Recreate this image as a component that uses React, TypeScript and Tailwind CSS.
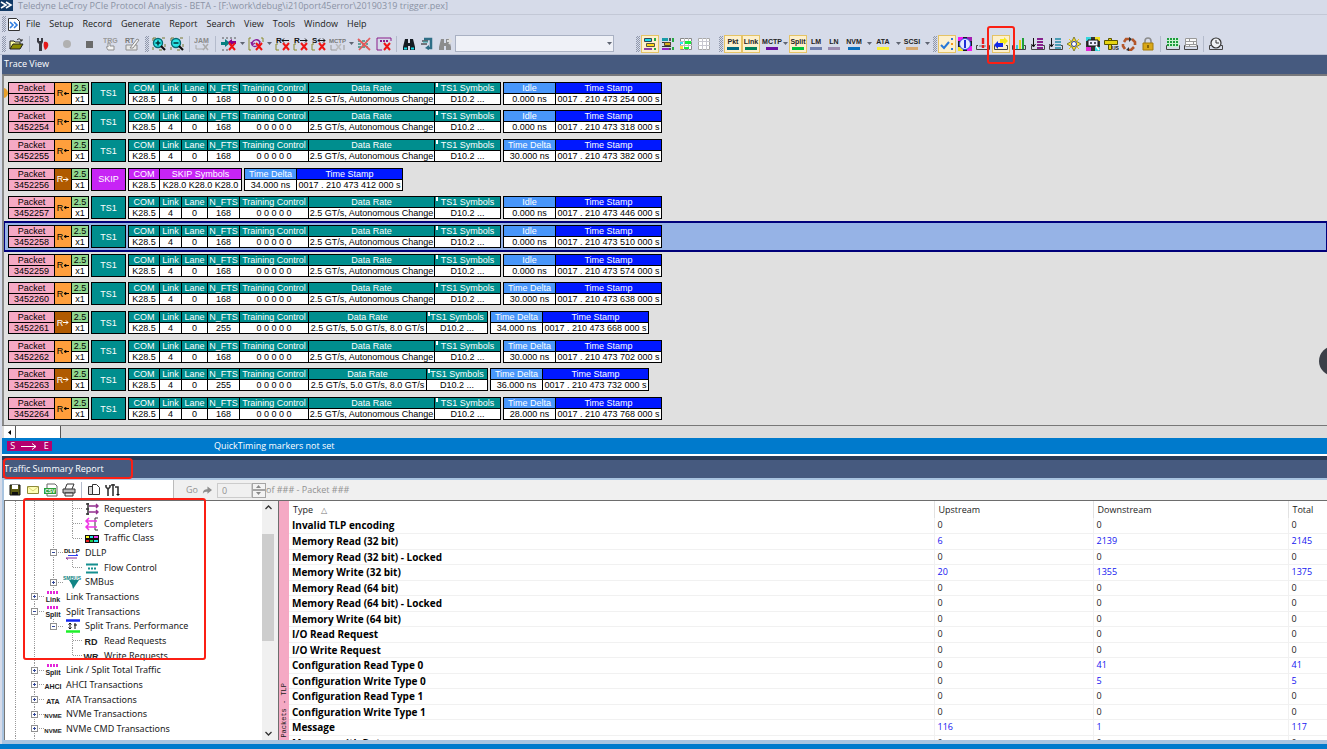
import { ReactNode } from "react";
import clsx from "clsx";

/* ---------- icons ---------- */

function Pic({ children, w = 16 }: { children: ReactNode; w?: number }) {
  return (
    <svg width={w} height="14" viewBox={`0 0 ${w} 14`} className="shrink-0" aria-hidden="true">
      {children}
    </svg>
  );
}

function RedX() {
  return <path d="M8 6l6 7m0-7l-6 7" stroke="#f01414" strokeWidth="2" fill="none" />;
}

function Tag({ children, x = 0, y = 6, size = 7, fill = "#111" }: { children: string; x?: number; y?: number; size?: number; fill?: string }) {
  return (
    <text x={x} y={y} fontSize={size} fontWeight="700" fill={fill} fontFamily="Liberation Sans, sans-serif">
      {children}
    </text>
  );
}

const FolderIcon = (
  <Pic>
    <path d="M2 12V4h4l1 1h5v2" fill="#ffffa0" stroke="#222" />
    <path d="M2 12l3-5h10l-3 5z" fill="#8c8c00" stroke="#222" />
    <path d="M9 3c2-2 4-1 4 1m1-2v2h-2" fill="none" stroke="#222" />
  </Pic>
);
const PlugIcon = (
  <Pic>
    <path d="M2 1h2v3h2V1h2v4L7 7v7H4V7L2 5z" fill="#3c3c44" />
    <path d="M9 5c5-2 6 5 1 8-1-2-2-5-1-8z" fill="#e51a1a" />
  </Pic>
);
const DotIcon = <Pic><circle cx="8" cy="7" r="4" fill="#b1b1b1" /></Pic>;
const StopIcon = <Pic><path d="M5 4h7v7H5z" fill="#6b6b6b" /></Pic>;
const TrgIcon = (
  <Pic>
    <Tag fill="#999">TRG</Tag>
    <path d="M5 13c-2-3-2-4 0-3V6h2v3h4v4z" fill="#f4f4f4" stroke="#8d8d8d" />
  </Pic>
);
const RtIcon = (
  <Pic>
    <path d="M2 8h11v5H2z" fill="#e8e8e8" stroke="#8d8d8d" />
    <Tag x={1} fill="#777">RT</Tag>
    <path d="M6 11l7-9 2 1-6 8z" fill="#f5f5f5" stroke="#8d8d8d" />
  </Pic>
);
function Zoom({ plus }: { plus?: boolean }) {
  return (
    <Pic>
      <path d="M2 1v12h12V1z" fill="none" stroke="#77772e" strokeDasharray="3 6" />
      <circle cx="7" cy="6" r="4.5" fill="#2ce5e5" stroke="#066b75" strokeWidth="1.4" />
      <path d={plus ? "M4.5 6h5M7 3.5v5" : "M4.5 6h5"} stroke="#00323a" strokeWidth="1.5" />
      <path d="M10 9l4 4" stroke="#111" strokeWidth="2.2" />
    </Pic>
  );
}
const JamIcon = (
  <Pic>
    <path d="M2 8v4h7" stroke="#aaa" fill="none" />
    <Tag fill="#888">JAM</Tag>
    <path d="M9 7l5 6m0-6l-5 6" stroke="#aaa" strokeWidth="1.5" />
  </Pic>
);
const ArrowXIcon = (
  <Pic>
    <path d="M1 1h14M1 13h6" stroke="#555" strokeDasharray="2 2" />
    <path d="M0 5h4V2l5 4-5 4V8H0z" fill="#078080" />
    <path d="M15 4h-4V2L7 5l4 4V7h4z" fill="#8a008a" />
    <RedX />
  </Pic>
);
const LoopXIcon = (
  <Pic>
    <path d="M3 1H1v12h2M13 1h2v4" fill="none" stroke="#8b8b2b" />
    <path d="M4 8c0-6 7-7 8-2M4 8l-1-3M4 8l3-2M12 4c0 5-6 7-8 4" fill="none" stroke="#8a1c9a" strokeWidth="1.3" />
    <RedX />
  </Pic>
);
function TagX({ text, left, right }: { text: string; left?: boolean; right?: boolean }) {
  return (
    <Pic>
      <path d="M3 7H1v6h3" fill="none" stroke="#8b8b2b" />
      <Tag x={1} size={8}>{text}</Tag>
      <path d="M7 3.5h7" stroke="#111" />
      {left && <path d="M9 1.5l-2 2 2 2" fill="none" stroke="#111" />}
      {right && <path d="M12 1.5l2 2-2 2" fill="none" stroke="#111" />}
      <RedX />
    </Pic>
  );
}
const MctpOffIcon = (
  <Pic w={18}>
    <path d="M2 8v5h6M15 8v5" stroke="#999" fill="none" />
    <Tag size={6} fill="#777">MCTP</Tag>
    <path d="M7 7l5 6m0-6l-5 6" stroke="#bbb" strokeWidth="1.5" />
  </Pic>
);
const NoGridIcon = (
  <Pic>
    <path d="M2 4h10M2 7h10M2 10h10" stroke="#3f8d80" strokeWidth="1.5" strokeDasharray="3 1" />
    <path d="M2 2l12 11M14 1L3 13" stroke="#e35a5a" strokeWidth="1.8" />
  </Pic>
);
const FrameXIcon = (
  <Pic>
    <path d="M1 13V1h14v3M1 13h5" fill="none" stroke="#8a1c8a" />
    <path d="M4 4h9" stroke="#8a1c8a" strokeWidth="2" strokeDasharray="2 1" />
    <RedX />
  </Pic>
);
function Binoculars({ off }: { off?: boolean }) {
  return (
    <Pic>
      <path d="M4 2h3v4h2V2h3l2 8v3H9V9H7v4H2v-3z" fill={off ? "#8c8c8c" : "#161c22"} />
      <path d={off ? "M10 4h4l-2-3m2 3l-2 3" : "M3 11.5h3M10 11.5h3"} stroke={off ? "#ddd" : "#14d9e5"} strokeWidth="1.8" fill="none" />
    </Pic>
  );
}
const HookIcon = (
  <Pic>
    <path d="M5 2h7v9H8" fill="none" stroke="#2e6e86" strokeWidth="2.5" />
    <path d="M3 4h6M2 7h6" stroke="#111" />
    <path d="M4 5h5" stroke="#26a5a5" />
    <path d="M10 8l-4 3 4 2z" fill="#2e6e86" />
  </Pic>
);
const BlocksIcon = (
  <Pic>
    <path d="M2.5 1.5h7v3h-7z" fill="#18dce8" stroke="#345" />
    <path d="M4.500 6.500h8v3h-8z" fill="#ffd817" stroke="#554" />
    <path d="M2 11h8v2H2z" fill="#9240a5" />
    <path d="M12 1h2v3h-2zM12 11h2v2h-2z" fill="#27a844" />
  </Pic>
);
const DenseBlocksIcon = (
  <Pic>
    <path d="M2 1h6v3H2z" fill="#189ca8" />
    <path d="M2 5h9v1H2zM2 9h9v1H2z" fill="#333" />
    <path d="M4.500 5.500h6v3h-6z" fill="#d8b020" stroke="#543" />
    <path d="M2 11h7v2H2z" fill="#9220c5" />
    <path d="M9 1h2v3H9zM9 11h2v2H9z" fill="#555" />
    <path d="M12 1h2v4h-2zM12 10h2v3h-2z" fill="#27a844" />
  </Pic>
);
const ColorGridIcon = (
  <Pic>
    <path d="M2.5 1.500h11v11h-11z" fill="#fff" stroke="#888" />
    <path d="M2 4.500h12M2 8.500h12M6.500 1v12M10.500 1v12" stroke="#bbb" />
    <path d="M7 4h6v3H7zM6 10h5v2H6z" fill="#12ee3c" />
    <path d="M2 5h3v2H2z" fill="#32e4ef" />
    <path d="M2 9h3v3H2z" fill="#f4e23c" />
  </Pic>
);
const PlainGridIcon = (
  <Pic>
    <path d="M2.5 1.500h11v11h-11z" fill="#fff" stroke="#aaa" />
    <path d="M2 4.500h12M2 8.500h12M6.500 1v12M10.500 1v12" stroke="#c7c7cf" />
  </Pic>
);
const CheckListIcon = (
  <Pic>
    <path d="M2 8l3 3 5-6" fill="none" stroke="#2878d8" strokeWidth="2" />
    <path d="M12 1h2v2h-2zM12 11h2v2h-2z" fill="#2878d8" />
    <path d="M12 6h2v2h-2z" fill="#f29a1a" />
  </Pic>
);
const InfoIcon = (
  <Pic>
    <path d="M1 0h14v14H1z" fill="#1c1c22" />
    <path d="M1 0h5v4H1zM10 9h5v5h-5z" fill="#f416f4" />
    <path d="M10 0h5v4h-5z" fill="#a01ab0" />
    <path d="M1 10h5v4H1z" fill="#f2e61a" />
    <circle cx="8" cy="7" r="5.5" fill="#e4eaff" stroke="#2f4be0" />
    <path d="M8 3v8" stroke="#1d2ed8" strokeWidth="2" />
  </Pic>
);
const Tray = <path d="M3 8.500H1.500v4h13v-4H13" fill="none" stroke="#444" />;
const AlertTrayIcon = (
  <Pic>
    {Tray}
    <path d="M4 9h7" stroke="#777" />
    <path d="M8 1v6M8 8v3" stroke="#e51a1a" strokeWidth="2.400" />
  </Pic>
);
const SummaryIcon = (
  <Pic>
    {Tray}
    <path d="M15 4l-4-4v2H7v4h4v2z" fill="#f6ea1c" />
    <path d="M1 8l4-4v2h5v4H5v2z" fill="#1428e8" />
  </Pic>
);
const ChartIcon = (
  <Pic>
    {Tray}
    <path d="M3 5v7" stroke="#e820d8" strokeWidth="2" />
    <path d="M6 8v4" stroke="#38c8d8" strokeWidth="2" />
    <path d="M9 3v9" stroke="#e5d51a" strokeWidth="2" />
    <path d="M12 1v11" stroke="#20a038" strokeWidth="2" />
  </Pic>
);
function ListTray({ color }: { color: string }) {
  return (
    <Pic>
      {Tray}
      <path d="M3.500 1v8M1.500 7l2 3 2-3" fill="none" stroke="#111" />
      <path d="M7 2h6M7 5h6M7 8h6M7 11h6" stroke={color} strokeWidth="2" />
    </Pic>
  );
}
const SunIcon = (
  <Pic>
    <path d="M8 0l2 4 5 3-5 3-2 4-2-4-5-3 5-3z" fill="#ffe22a" stroke="#65671f" strokeWidth=".8" />
    <path d="M3 2l2 2M13 2l-2 2M3 12l2-2M13 12l-2-2" stroke="#e8c81c" />
    <circle cx="8" cy="7" r="2.5" fill="#fff" stroke="#2336a0" />
  </Pic>
);
const FindTilesIcon = (
  <Pic>
    <path d="M1 0h14v14H1z" fill="#333" />
    <path d="M1 0h5v4H1zM10 10h5v4h-5z" fill="#35d6dd" />
    <path d="M10 0h5v4h-5z" fill="#f0e020" />
    <path d="M1 10h5v4H1z" fill="#e328d5" />
    <path d="M3 3h10v6H3z" fill="#eef" stroke="#111" />
    <path d="M5 5h2v2H5zM9 5h2v2H9z" fill="#556" />
    <path d="M11 9l3 4" stroke="#fff" strokeWidth="1.5" />
  </Pic>
);
const RulerIcon = (
  <Pic>
    <path d="M5.500 1.500h3v11h-3z" fill="#e8d510" stroke="#5b5400" />
    <path d="M1.500 3.500h13v4h-13z" fill="#e8d510" stroke="#5b5400" />
    <Tag x={9} y={13} size={5}>US</Tag>
  </Pic>
);
const CycleIcon = (
  <Pic>
    <path d="M3 5l2-3h4M11 2l3 3v3M13 10l-3 3H7M4 12L2 9V7" fill="none" stroke="#b4562a" strokeWidth="2.600" />
    <path d="M8 0l3 2-3 3zM8 10l-3 3 3 1z" fill="#333" />
  </Pic>
);
const LockIcon = (
  <Pic>
    <path d="M5 7V4c0-4 6-4 6 0v3" fill="none" stroke="#8d8d8d" strokeWidth="1.6" />
    <path d="M3 6h10v7H3z" fill="#d9a818" stroke="#a57a08" />
    <path d="M8 8v3" stroke="#6a4d00" strokeWidth="1.5" />
  </Pic>
);
function BrickTray({ green }: { green?: boolean }) {
  return (
    <Pic>
      {Tray}
      <path d="M2 1h12v9H2z" fill={green ? "#c8f2cf" : "#fafafa"} />
      {green ? (
        <path d="M2 2h12M2 5h12M2 8h12" stroke="#1d9c3c" strokeWidth="2" strokeDasharray="2 1" />
      ) : (
        <path d="M2.500 1.500h11v8h-11zM2 4.500h12M2 7.500h12M6.500 1v3M10.500 5v3M6.500 8v2" stroke="#999" fill="none" />
      )}
    </Pic>
  );
}
const ClockTrayIcon = (
  <Pic>
    {Tray}
    <circle cx="8" cy="6" r="5" fill="#eef0f4" stroke="#333" strokeWidth="1.2" />
    <path d="M8 3v3h3" fill="none" stroke="#333" />
  </Pic>
);

/* ---------- toolbar parts ---------- */

function ToolButton({ label, on, className, children }: { label: string; on?: boolean; className?: string; children: ReactNode }) {
  return (
    <button
      type="button"
      aria-label={label}
      className={clsx(
        "relative flex h-[18px] w-[18px] shrink-0 items-center justify-center border",
        on ? "border-[#e5c365] bg-[#fdf0cd]" : "border-transparent",
        className,
      )}
    >
      {children}
    </button>
  );
}

function LabelButton({ text, bar, on, className }: { text: string; bar: string; on?: boolean; className?: string }) {
  return (
    <button
      type="button"
      className={clsx(
        "flex h-[18px] w-[18px] shrink-0 flex-col items-center justify-center border font-['Liberation_Sans',sans-serif] text-[7px] leading-[10px] font-bold text-[#222]",
        on ? "border-[#e5c365] bg-[#fdf0cd]" : "border-transparent",
        className,
      )}
    >
      {text}
      <span className={clsx("h-[3px] w-3", bar)} />
    </button>
  );
}

function Grip({ className }: { className?: string }) {
  return (
    <span
      className={clsx(
        "h-4 w-1 shrink-0 bg-[repeating-conic-gradient(#8f97ab_0_25%,#d6dbe9_0_50%)] bg-[length:2px_2px]",
        className,
      )}
    />
  );
}

function Sep({ className }: { className?: string }) {
  return <span className={clsx("h-4 w-px shrink-0 bg-[#b4bbcc]", className)} />;
}

function Caret({ className }: { className?: string }) {
  return (
    <span className={clsx("flex w-2 shrink-0 justify-center", className)}>
      <svg width="5" height="3" viewBox="0 0 5 3"><path d="M0 0h5L2.500 3z" fill="#5f6572" /></svg>
    </span>
  );
}

function MainToolbar() {
  return (
    <div className="flex h-[22px] items-center border-b border-[#b9c0d2] pl-0.5">
      <Grip />
      <ToolButton label="Open" className="ml-px">{FolderIcon}</ToolButton>
      <Sep className="mx-1" />
      <ToolButton label="Recording options">{PlugIcon}</ToolButton>
      <ToolButton label="Start recording" className="ml-1.5">{DotIcon}</ToolButton>
      <ToolButton label="Stop recording" className="ml-1">{StopIcon}</ToolButton>
      <ToolButton label="Manual trigger" className="ml-1">{TrgIcon}</ToolButton>
      <ToolButton label="Real-time statistics" className="ml-[3px]">{RtIcon}</ToolButton>
      <Grip className="ml-1" />
      <ToolButton label="Zoom in" className="ml-px"><Zoom plus /></ToolButton>
      <ToolButton label="Zoom out"><Zoom /></ToolButton>
      <Sep className="mx-[3px]" />
      <ToolButton label="Jammer">{JamIcon}</ToolButton>
      <Sep className="mx-1" />
      <ToolButton label="Hide direction">{ArrowXIcon}</ToolButton>
      <Caret />
      <ToolButton label="Hide loops" className="ml-px">{LoopXIcon}</ToolButton>
      <Caret />
      <ToolButton label="Hide upstream" className="ml-px"><TagX text="R" left /></ToolButton>
      <ToolButton label="Hide downstream"><TagX text="R" right /></ToolButton>
      <ToolButton label="Hide split"><TagX text="S" left right /></ToolButton>
      <ToolButton label="Hide MCTP" className="ml-px">{MctpOffIcon}</ToolButton>
      <Caret />
      <ToolButton label="Hide channel">{NoGridIcon}</ToolButton>
      <ToolButton label="Hide frame" className="ml-0.5">{FrameXIcon}</ToolButton>
      <Sep className="mx-[3px]" />
      <ToolButton label="Find"><Binoculars /></ToolButton>
      <ToolButton label="Find next">{HookIcon}</ToolButton>
      <ToolButton label="Find again"><Binoculars off /></ToolButton>
      <div className="relative ml-px h-[17px] w-[159px] shrink-0">
        <select aria-label="Search text" className="h-full w-full appearance-none border border-[#a9b1c3] bg-[#eff1f7]">
          <option />
        </select>
        <Caret className="pointer-events-none absolute top-[7px] right-px" />
      </div>
      <Grip className="ml-[22px]" />
      <ToolButton label="Packet view" on className="ml-px">{BlocksIcon}</ToolButton>
      <ToolButton label="Compact view">{DenseBlocksIcon}</ToolButton>
      <ToolButton label="Spreadsheet view">{ColorGridIcon}</ToolButton>
      <ToolButton label="Plain view">{PlainGridIcon}</ToolButton>
      <Grip className="ml-1.5" />
      <LabelButton text="Pkt" bar="bg-[#006a82]" on className="ml-px" />
      <LabelButton text="Link" bar="bg-[#00805a]" on />
      <LabelButton text="MCTP" bar="bg-[#6a0fa5]" className="ml-[3px]" />
      <Caret />
      <LabelButton text="Split" bar="bg-[#00c03c]" on />
      <LabelButton text="LM" bar="bg-[#7080ae]" />
      <LabelButton text="LN" bar="bg-[#9b8cb0]" />
      <LabelButton text="NVM" bar="bg-[#0a70c0]" className="ml-0.5" />
      <Caret className="ml-0.5" />
      <LabelButton text="ATA" bar="bg-[#f8f038]" className="ml-px" />
      <Caret className="ml-0.5" />
      <LabelButton text="SCSI" bar="bg-[#d8aa70]" className="ml-px" />
      <Caret className="ml-0.5" />
      <Grip className="ml-0.5" />
      <ToolButton label="Verification" on className="ml-px">{CheckListIcon}</ToolButton>
      <ToolButton label="File information">{InfoIcon}</ToolButton>
      <ToolButton label="Error summary">{AlertTrayIcon}</ToolButton>
      <ToolButton label="Traffic summary" on>
        {SummaryIcon}
        <span className="absolute -top-2.5 -left-1.5 z-20 h-[38px] w-7 rounded-[3px] border-2 border-[#fb1f14]" />
      </ToolButton>
      <ToolButton label="Bus utilization">{ChartIcon}</ToolButton>
      <ToolButton label="Link tracker" className="ml-px"><ListTray color="#86208c" /></ToolButton>
      <ToolButton label="Data flow"><ListTray color="#4c9eb5" /></ToolButton>
      <ToolButton label="Navigator">{SunIcon}</ToolButton>
      <ToolButton label="Config space" className="ml-px">{FindTilesIcon}</ToolButton>
      <ToolButton label="Timing calculator">{RulerIcon}</ToolButton>
      <ToolButton label="Flow control">{CycleIcon}</ToolButton>
      <ToolButton label="Lock" className="ml-px">{LockIcon}</ToolButton>
      <Sep className="mx-[3px]" />
      <ToolButton label="Memory map"><BrickTray green /></ToolButton>
      <ToolButton label="Register map"><BrickTray /></ToolButton>
      <Sep className="mx-[3px]" />
      <ToolButton label="Timing">{ClockTrayIcon}</ToolButton>
    </div>
  );
}

/* ---------- trace view ---------- */

type Packet = {
  id: number;
  kind: "up" | "down" | "skip";
  gap: "Idle" | "Time Delta";
  ns: string;
  stamp: string;
  selected?: boolean;
};

const packets: Packet[] = [
  { id: 3452253, kind: "up", gap: "Idle", ns: "0.000", stamp: "254" },
  { id: 3452254, kind: "up", gap: "Idle", ns: "0.000", stamp: "318" },
  { id: 3452255, kind: "up", gap: "Time Delta", ns: "30.000", stamp: "382" },
  { id: 3452256, kind: "skip", gap: "Time Delta", ns: "34.000", stamp: "412" },
  { id: 3452257, kind: "up", gap: "Idle", ns: "0.000", stamp: "446" },
  { id: 3452258, kind: "up", gap: "Idle", ns: "0.000", stamp: "510", selected: true },
  { id: 3452259, kind: "up", gap: "Idle", ns: "0.000", stamp: "574" },
  { id: 3452260, kind: "up", gap: "Time Delta", ns: "30.000", stamp: "638" },
  { id: 3452261, kind: "down", gap: "Time Delta", ns: "34.000", stamp: "668" },
  { id: 3452262, kind: "up", gap: "Time Delta", ns: "30.000", stamp: "702" },
  { id: 3452263, kind: "down", gap: "Time Delta", ns: "36.000", stamp: "732" },
  { id: 3452264, kind: "up", gap: "Time Delta", ns: "28.000", stamp: "768" },
];

function Cell({ head, value, color, width, corner }: { head: string; value: string; color: string; width: string; corner?: boolean }) {
  return (
    <div className={clsx("flex shrink-0 flex-col border-r border-black text-center", width)}>
      <div className={clsx("relative h-[11px] border-b border-black leading-[11px]", color)}>
        {corner && <span className="absolute top-0 left-px h-1 w-0.5 bg-white" />}
        {head}
      </div>
      <div className="h-[10px] bg-white leading-[11px] text-black">{value}</div>
    </div>
  );
}

const box = "flex h-[23px] shrink-0 border-y border-l border-black";

function PacketRow({ p }: { p: Packet }) {
  const skip = p.kind === "skip";
  const right = p.kind !== "up";
  const main = skip ? "bg-[#c724f5] text-white" : "bg-[#008e8e] text-white";
  return (
    <div
      className={clsx(
        "flex h-[29px] items-center whitespace-nowrap nth-[3n+2]:h-7",
        p.selected && "bg-[#96b3e6] outline-2 -outline-offset-1 outline-[#00007a]",
      )}
    >
      <div className={clsx(box, "ml-1")}>
        <div className="flex w-[46px] flex-col border-r border-black bg-[#f5a9c4] text-center">
          <div className="h-[11px] border-b border-black leading-[11px]">Packet</div>
          <div className="h-[10px] leading-[11px]">{p.id}</div>
        </div>
        <div className={clsx("flex w-[17px] items-center justify-center border-r border-black", right ? "bg-[#b05a00] text-white" : "bg-[#ff9f3c]")}>
          R
          <svg width="6" height="7" viewBox="0 0 6 7" aria-hidden="true">
            <path d={right ? "M0 3.500h5M3 1.500l2 2-2 2" : "M1 3.500h5M3 2.500l-2 1 2 1z"} stroke="currentColor" fill="none" />
          </svg>
        </div>
        <Cell head="2.5" value="x1" color="bg-[#8fd68f] text-black" width="w-[17px]" />
      </div>
      <div className={clsx("ml-0.5 flex h-[23px] w-[35px] shrink-0 items-center justify-center border border-black", main)}>
        {skip ? "SKIP" : "TS1"}
      </div>
      <div className={clsx(box, "ml-0.5")}>
        <Cell head="COM" value="K28.5" color={main} width="w-[31px]" />
        {skip ? (
          <Cell head="SKIP Symbols" value="K28.0 K28.0 K28.0" color={main} width="w-[82px]" />
        ) : (
          <>
            <Cell head="Link" value="4" color={main} width="w-[22px]" />
            <Cell head="Lane" value="0" color={main} width="w-[26px]" />
            <Cell head="N_FTS" value={right ? "255" : "168"} color={main} width="w-8" />
            <Cell head="Training Control" value="0 0 0 0 0" color={main} width="w-[69px]" />
            <Cell
              head="Data Rate"
              value={right ? "2.5 GT/s, 5.0 GT/s, 8.0 GT/s" : "2.5 GT/s, Autonomous Change"}
              color={main}
              width={right ? "w-[118px]" : "w-[126px]"}
            />
            <Cell head="TS1 Symbols" value="D10.2 ..." color={main} width={right ? "w-[61px]" : "w-[66px]"} corner />
          </>
        )}
      </div>
      <div className={clsx(box, "ml-0.5")}>
        <Cell head={p.gap} value={`${p.ns} ns`} color="bg-[#4896fa] text-white" width="w-[52px]" />
        <Cell head="Time Stamp" value={`0017 . 210 473 ${p.stamp} 000 s`} color="bg-[#0018ff] text-white" width="w-[106px]" />
      </div>
    </div>
  );
}

/* ---------- report tree ---------- */

function TreeTag({ text, dots, size = 7 }: { text: string; dots?: boolean; size?: number }) {
  return (
    <Pic w={19}>
      {dots && <path d="M3 2.500h11" stroke="#e326d9" strokeWidth="3" strokeDasharray="2 1" />}
      <text x="9" y={dots ? 12 : 11} textAnchor="middle" fontSize={size} fontWeight="700" fill="#222" fontFamily="Liberation Sans, sans-serif">
        {text}
      </text>
    </Pic>
  );
}

const RequestersIcon = (
  <Pic>
    <path d="M4 1v12M2 2h3M2 7h3M2 12h3" stroke="#333" strokeWidth="1.5" />
    <path d="M5 4h9M5 10h9M12 2l2 2-2 2M12 8l2 2-2 2" fill="none" stroke="#93308f" strokeWidth="1.4" />
  </Pic>
);
const CompletersIcon = (
  <Pic>
    <path d="M14 1h-3v12h3" fill="none" stroke="#333" />
    <path d="M2 4h11M2 10h11M5 1L2 4l3 3M5 7l-3 3 3 3" fill="none" stroke="#ef35e5" strokeWidth="1.5" />
  </Pic>
);
const TrafficClassIcon = (
  <Pic>
    <path d="M1 4h14v8H1z" fill="#111" />
    <path d="M2 5h3v2H2z" fill="#ff2" />
    <path d="M6 5h3v2H6zM10 9h4v2h-4z" fill="#26e2e8" />
    <path d="M10 5h4v2h-4z" fill="#f03cf0" />
    <path d="M2 9h3v2H2z" fill="#e22" />
    <path d="M6 9h3v2H6z" fill="#2c4" />
  </Pic>
);
const DllpIcon = (
  <Pic w={19}>
    <Tag x={1} y={7} size={6}>DLLP</Tag>
    <path d="M5 9.500h10l-2-1.500" stroke="#2d3ef0" fill="none" />
    <path d="M14 12H3l2 1.500" stroke="#8a2b96" fill="none" />
  </Pic>
);
const FlowIcon = (
  <Pic>
    <path d="M2 3.500h12M2 11.500h12" stroke="#169090" strokeWidth="2" />
    <path d="M4 7.500h9" stroke="#169090" strokeWidth="2" strokeDasharray="2 1" />
  </Pic>
);
const SmbusIcon = (
  <Pic w={19}>
    <path d="M6 5h10l-6 9-1-4z" fill="#128585" />
    <Tag y={5} size={5} fill="#128585">SMBUS</Tag>
  </Pic>
);
const SplitPerfIcon = (
  <Pic>
    <path d="M1 1.500h14" stroke="#1428f0" strokeWidth="2.5" />
    <path d="M1 12.500h14" stroke="#1ef02a" strokeWidth="2.5" />
    <path d="M5 4v6M3.500 5.500L5 4l1.500 1.500M3.500 8.500L5 10l1.500-1.500M10 4v6M9 6h3" fill="none" stroke="#111" />
  </Pic>
);

type Guide = "line" | "tee" | "end" | "none" | "plus" | "minus" | "minus-end";
type Node = { label: string; guides: Guide[]; icon: ReactNode };

const nodes: Node[] = [
  { label: "Requesters", guides: ["line", "line", "line", "tee"], icon: RequestersIcon },
  { label: "Completers", guides: ["line", "line", "line", "tee"], icon: CompletersIcon },
  { label: "Traffic Class", guides: ["line", "line", "line", "end"], icon: TrafficClassIcon },
  { label: "DLLP", guides: ["line", "line", "minus"], icon: DllpIcon },
  { label: "Flow Control", guides: ["line", "line", "line", "end"], icon: FlowIcon },
  { label: "SMBus", guides: ["line", "line", "plus"], icon: SmbusIcon },
  { label: "Link Transactions", guides: ["line", "plus"], icon: <TreeTag text="Link" dots /> },
  { label: "Split Transactions", guides: ["line", "minus"], icon: <TreeTag text="Split" dots /> },
  { label: "Split Trans. Performance", guides: ["line", "line", "minus-end"], icon: SplitPerfIcon },
  { label: "Read Requests", guides: ["line", "line", "none", "tee"], icon: <TreeTag text="RD" size={9} /> },
  { label: "Write Requests", guides: ["line", "line", "none", "end"], icon: <TreeTag text="WR" size={9} /> },
  { label: "Link / Split Total Traffic", guides: ["line", "plus"], icon: <TreeTag text="Split" dots /> },
  { label: "AHCI Transactions", guides: ["line", "plus"], icon: <TreeTag text="AHCI" /> },
  { label: "ATA Transactions", guides: ["line", "plus"], icon: <TreeTag text="ATA" /> },
  { label: "NVMe Transactions", guides: ["line", "plus"], icon: <TreeTag text="NVME" size={6} /> },
  { label: "NVMe CMD Transactions", guides: ["line", "plus"], icon: <TreeTag text="NVME" size={6} /> },
  { label: "", guides: ["line", "line"], icon: <Pic><path d="M2 5h6v6H2z" fill="#7c1420" /><path d="M12 3h3v8h-3z" fill="#111" /></Pic> },
];

function TreeGuide({ kind }: { kind: Guide }) {
  const half = kind === "end" || kind === "minus-end";
  const boxed = kind === "plus" || kind === "minus" || kind === "minus-end";
  return (
    <svg width="19" height="15" viewBox="0 0 19 15" className="shrink-0" aria-hidden="true">
      {kind !== "none" && <path d={half ? "M9.500 0v8" : "M9.500 0v15"} stroke="#9a9a9a" strokeDasharray="1 1" />}
      {(boxed || kind === "tee" || kind === "end") && <path d="M10 7.500h9" stroke="#9a9a9a" strokeDasharray="1 1" />}
      {boxed && <rect x="6.500" y="4.500" width="6" height="6" fill="#fff" stroke="#919191" />}
      {boxed && <path d={kind === "plus" ? "M8 7.500h3M9.500 6v3" : "M8 7.500h3"} stroke="#32489a" />}
    </svg>
  );
}

function Tree() {
  return (
    <ul className="flex-1 overflow-hidden pl-px">
      {nodes.map((n, i) => (
        <li key={i} className="flex h-[15px] items-center whitespace-nowrap nth-[3n]:h-[14px]">
          {n.guides.map((g, j) => (
            <TreeGuide key={j} kind={g} />
          ))}
          <span className="flex w-[19px] shrink-0 justify-center">{n.icon}</span>
          <span className="ml-[3px]">{n.label}</span>
        </li>
      ))}
    </ul>
  );
}

/* ---------- report table ---------- */

const rows: [string, number, number, number][] = [
  ["Invalid TLP encoding", 0, 0, 0],
  ["Memory Read (32 bit)", 6, 2139, 2145],
  ["Memory Read (32 bit) - Locked", 0, 0, 0],
  ["Memory Write (32 bit)", 20, 1355, 1375],
  ["Memory Read (64 bit)", 0, 0, 0],
  ["Memory Read (64 bit) - Locked", 0, 0, 0],
  ["Memory Write (64 bit)", 0, 0, 0],
  ["I/O Read Request", 0, 0, 0],
  ["I/O Write Request", 0, 0, 0],
  ["Configuration Read Type 0", 0, 41, 41],
  ["Configuration Write Type 0", 0, 5, 5],
  ["Configuration Read Type 1", 0, 0, 0],
  ["Configuration Write Type 1", 0, 0, 0],
  ["Message", 116, 1, 117],
  ["Message with Data", 0, 0, 0],
];

function ReportTable() {
  return (
    <div className="min-w-0 flex-1 overflow-hidden bg-white">
      <table className="w-full table-fixed border-collapse text-left text-[9px] leading-[14px]">
        <thead>
          <tr className="h-[17px]">
            <th className="pl-1 font-normal">
              Type <span className="ml-1.5 text-[8px] text-[#777]">△</span>
            </th>
            <th className="w-[159px] border-l border-[#e2e2e2] pl-1 font-normal">Upstream</th>
            <th className="w-[195px] border-l border-[#e2e2e2] pl-1 font-normal">Downstream</th>
            <th className="w-[39px] border-l border-[#e2e2e2] pl-1 font-normal">Total</th>
          </tr>
        </thead>
        <tbody>
          {rows.map(([name, ...values]) => (
            <tr key={name} className="h-[15px] border-b border-[#f1f1f1] even:h-4">
              <th scope="row" className="p-0 pl-[3px] text-[10px] font-bold text-black">{name}</th>
              {values.map((v, i) => (
                <td key={i} className={clsx("border-l border-[#f1f1f1] p-0 pl-[3px]", v ? "text-[#1414f0]" : "text-[#222]")}>
                  {v}
                </td>
              ))}
            </tr>
          ))}
        </tbody>
      </table>
    </div>
  );
}

function ReportToolbar() {
  return (
    <div className="flex h-5 items-center bg-[#f0f0f0] text-[9px] text-[#929292]">
      <div className="flex h-full w-[170px] items-center border-r border-[#bbb] bg-white pl-0.5">
        <ToolButton label="Save">
          <Pic><path d="M3 2h10v10H3z" fill="#5c5c14" stroke="#111" /><path d="M5 2h6v4H5z" fill="#fff" /><path d="M5 9h6v3H5z" fill="#111" /></Pic>
        </ToolButton>
        <ToolButton label="Send by mail">
          <Pic><path d="M2.500 3.500h11v7h-11z" fill="#ffffb4" stroke="#8e8a3a" /><path d="M3 4l5 4 5-4" fill="none" stroke="#ddd27a" /></Pic>
        </ToolButton>
        <ToolButton label="Export CSV">
          <Pic><path d="M4 1h8l2 2v10H4z" fill="#fff" stroke="#666" /><path d="M1 5h12v6H1z" fill="#2ba03a" /><Tag x={2} y={10} size={5} fill="#fff">CSV</Tag></Pic>
        </ToolButton>
        <ToolButton label="Print">
          <Pic><path d="M4 6l2-5h7l-2 5" fill="#fff" stroke="#333" /><path d="M2 6h12v4H2z" fill="#bbb" stroke="#333" /><path d="M4 10h8v3H4z" fill="#eee" stroke="#333" /></Pic>
        </ToolButton>
        <Sep className="mx-[3px]" />
        <ToolButton label="Copy">
          <Pic><path d="M2.500 3.500h5v8h-5z" fill="#ddd" stroke="#333" /><path d="M6.500 1.500h4l3 3v7h-7z" fill="#fff" stroke="#333" /></Pic>
        </ToolButton>
        <ToolButton label="Settings">
          <Pic><path d="M2 2v2l2 2 2-2V2M4 6v7M9 1v12M7 2h4M11 4h3v7" fill="none" stroke="#333" strokeWidth="1.6" /><path d="M12 11h4l-2 2z" fill="#111" /></Pic>
        </ToolButton>
      </div>
      <button type="button" className="ml-3 flex items-center gap-1">
        Go
        <svg width="10" height="9" viewBox="0 0 11 9"><path d="M1 8c0-4 2-5 5-5V0l5 4-5 4V6C4 6 2 6 1 8z" fill="#8d8d8d" /></svg>
      </button>
      <input aria-label="Packet index" defaultValue="0" className="ml-[5px] h-[15px] w-[35px] border border-[#ccc] bg-[#f0f0f0] px-1" />
      <div className="flex h-[15px] w-3.5 flex-col">
        <button type="button" aria-label="Increase" className="flex h-2 items-center justify-center border border-[#a5a5a5] bg-[#f3f3f3]">
          <svg width="5" height="3" viewBox="0 0 5 3"><path d="M0 3h5L2.500 0z" fill="#888" /></svg>
        </button>
        <button type="button" aria-label="Decrease" className="flex h-2 items-center justify-center border border-[#a5a5a5] bg-[#f3f3f3]">
          <svg width="5" height="3" viewBox="0 0 5 3"><path d="M0 0h5L2.500 3z" fill="#888" /></svg>
        </button>
      </div>
      <span>of ### - Packet ###</span>
    </div>
  );
}

const menus = ["File", "Setup", "Record", "Generate", "Report", "Search", "View", "Tools", "Window", "Help"];

export default function App() {
  return (
    <div className="relative flex h-screen flex-col overflow-hidden bg-[#d6dbe9] font-['Open_Sans','Noto_Sans',sans-serif] text-[9px] leading-3 text-[#1b1b1b]">
      <header className="shrink-0">
        <div className="flex h-[15px] items-start gap-[5px] border-b border-[#c3c8d6] text-[#8b93a5]">
          <svg width="13" height="11" viewBox="0 0 13 11" aria-hidden="true">
            <path d="M0 0h13v11H0z" fill="#123a66" />
            <path d="M1 2l5 3-5 3M6 2l5 3-5 3" fill="none" stroke="#fff" strokeWidth="1.6" />
          </svg>
          <h1>Teledyne LeCroy PCIe Protocol Analysis - BETA - [F:\work\debug\i210port45error\20190319 trigger.pex]</h1>
        </div>
        <nav className="flex h-[18px] items-center pl-0.5">
          <Grip />
          <svg width="12" height="13" viewBox="0 0 12 13" className="mr-1.5 ml-0.5" aria-hidden="true">
            <path d="M.5.5h8l3 3v9H.5z" fill="#fff" stroke="#333" />
            <path d="M2 4l3 3-3 3M6 4l3 3-3 3" fill="none" stroke="#2f7de0" strokeWidth="1.6" />
          </svg>
          <div className="flex gap-[9px]">
            {menus.map((m) => (
              <button key={m} type="button">{m}</button>
            ))}
          </div>
        </nav>
        <MainToolbar />
      </header>

      <section className="flex min-h-0 flex-1 flex-col pl-0.5">
        <h2 className="h-[19px] shrink-0 bg-[#465a7f] pl-0.5 leading-[18px] text-white">Trace View</h2>
        <div className="relative min-h-0 flex-1 overflow-hidden border-t-2 border-l-2 border-t-[#77787c] border-l-[#8a8a8a] bg-[#e0e0e0] pt-[3px] font-['Liberation_Sans',sans-serif] text-[9px] text-black">
          <span className="absolute top-3 -left-1.5 h-2.5 w-2.5 rounded-full bg-[#e8a02c]" />
          {packets.map((p) => (
            <PacketRow key={p.id} p={p} />
          ))}
        </div>
        <div className="flex h-[13px] shrink-0 border-t border-[#777] bg-[#dcdcdc] pl-0.5">
          <button type="button" aria-label="Scroll left" className="flex w-3 items-center justify-center border-r border-[#555] bg-white">
            <svg width="3" height="5" viewBox="0 0 3 5"><path d="M3 0v5L0 2.500z" /></svg>
          </button>
          <div className="w-[45px] border-r border-[#555] bg-white" />
        </div>
        <div className="flex h-[18px] shrink-0 items-center border-b-2 border-white bg-[#007acc] text-white">
          <span className="ml-[5px] flex h-2.5 w-[45px] items-center justify-around bg-[#b4006e]">
            S
            <svg width="16" height="7" viewBox="0 0 16 7"><path d="M0 3.500h15M11 .5l4 3-4 3" fill="none" stroke="#fff" /></svg>
            E
          </span>
          <span className="ml-[162px]">QuickTiming markers not set</span>
        </div>
      </section>

      <section className="relative shrink-0 pl-0.5">
        <div className="border-t-4 border-[#293955] bg-[#465a7f]">
          <h2 className="relative h-[18px] pl-0.5 leading-[18px] text-white">
            Traffic Summary Report
            <span className="absolute -top-0.5 left-px h-[21px] w-[130px] rounded-sm border-2 border-[#fb1f14]" />
          </h2>
        </div>
        <div className="border-t-2 border-b-4 border-l-2 border-[#a9c4e0] bg-[#f0f0f0]">
          <ReportToolbar />
          <div className="flex h-60 border-t border-[#6d6d6d]">
            <div className="flex w-[270px] border-l border-[#777] bg-white font-['Noto_Sans',sans-serif]">
              <Tree />
              <div className="flex w-3 flex-col items-center bg-[#f0f0f0] py-1">
                <svg width="7" height="5" viewBox="0 0 7 5"><path d="M.5 4l3-3 3 3" fill="none" stroke="#333" strokeWidth="1.3" /></svg>
                <div className="mt-6 h-[107px] w-full bg-[#cdcdcd]" />
                <svg className="mt-auto" width="7" height="5" viewBox="0 0 7 5"><path d="M.5 1l3 3 3-3" fill="none" stroke="#333" strokeWidth="1.3" /></svg>
              </div>
            </div>
            <div className="ml-1 flex min-w-0 flex-1 border-l border-[#6d6d6d]">
              <div className="flex w-2.5 items-start justify-center bg-[#f5a9c4]">
                <span className="mt-auto mb-0.5 rotate-180 font-['Liberation_Mono',monospace] text-[7px] leading-[10px] [writing-mode:vertical-rl]">Packets - TLP</span>
              </div>
              <ReportTable />
            </div>
          </div>
        </div>
        <span className="pointer-events-none absolute top-[42px] left-[23px] z-20 h-[162px] w-[183px] rounded-[3px] border-2 border-[#fb1f14]" />
      </section>
      <footer className="h-[5px] shrink-0 bg-[#007acc]" />

      <button type="button" aria-label="Open side panel" className="absolute top-[346px] -right-[22px] h-[30px] w-[30px] rounded-full bg-[#3c4048]" />
    </div>
  );
}
